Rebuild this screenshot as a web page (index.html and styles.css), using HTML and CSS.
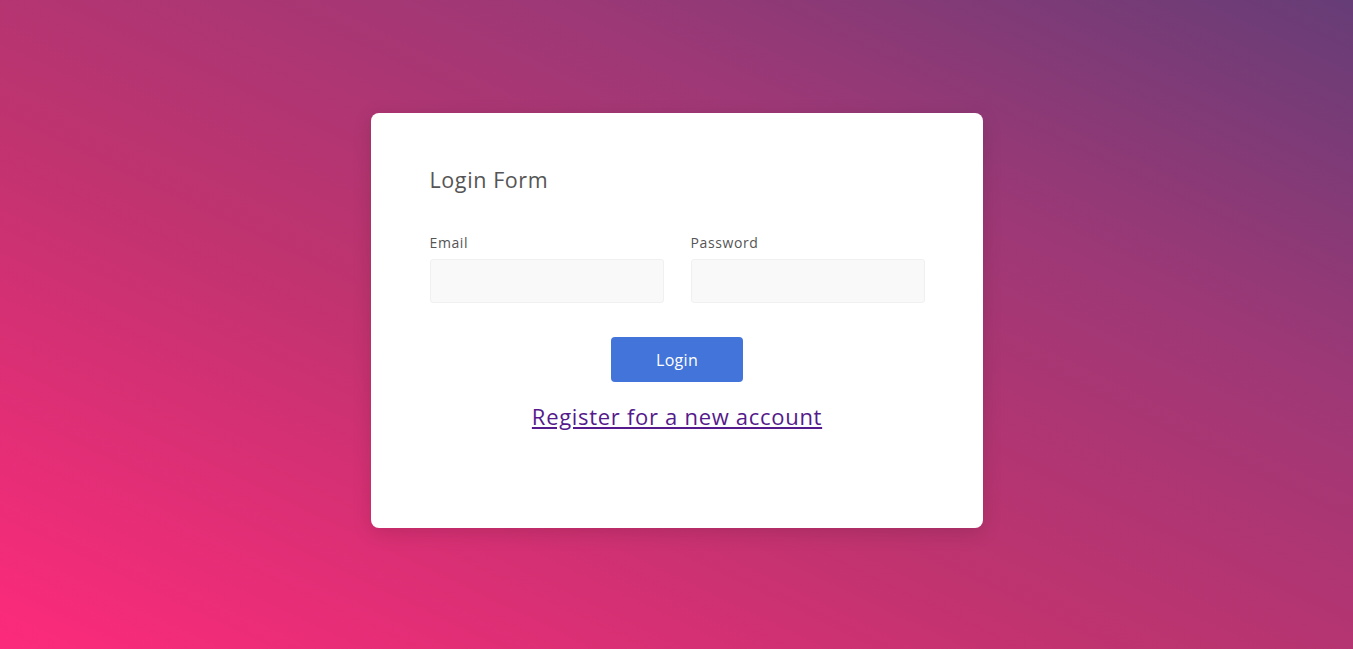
FILE: index.html
```html
<html>
<head>
  <meta name="viewport" content="width=device-width, initial-scale=1">
  <title>Login</title>
  <link rel="stylesheet" href="styles.css">
</head>
<body>
  <div class="wrapper">
    <div class="card">
      <h2 class="title">Login Form</h2>
      <form class="form">
        <div class="form-row">
          <div class="form-group">
            <label for="email" class="form-label">Email</label>
            <input type="email" id="email" class="form-control">
          </div>
          <div class="form-group">
            <label for="password" class="form-label">Password</label>
            <input type="password" id="password" class="form-control">
          </div>
        </div>
        <div class="actions">
          <button type="submit" class="btn">Login</button>
          <a href="#" class="register">Register for a new account</a>
        </div>
      </form>
    </div>
  </div>
</body>
</html>
```

FILE: styles.css
```css
* {
  box-sizing: border-box;
}

body {
  margin: 0;
  font-family: "Open Sans", "Noto Sans", sans-serif;
  color: #555;
  background: linear-gradient(to top right, #fd2a7b 0%, #c0336f 40%, #9e3876 70%, #663d77 100%);
  min-height: 100vh;
}

.wrapper {
  min-height: 100vh;
  display: flex;
  justify-content: center;
  align-items: center;
  padding-bottom: 8px;
}

.card {
  width: 612px;
  height: 415px;
  background-color: #fff;
  border-radius: 8px;
  box-shadow: 0 5px 20px rgba(0, 0, 0, 0.13);
  padding: 52px 58px 0 59px;
}

.title {
  margin: 0;
  font-size: 21.5px;
  font-weight: 400;
  line-height: 30px;
  letter-spacing: 0.6px;
  color: #555;
}

.form {
  margin-top: 38px;
}

/* fila de campos */
.form-row {
  display: flex;
  gap: 27px;
}

.form-group {
  flex: 1;
  display: flex;
  flex-direction: column;
}

.form-label {
  font-size: 14px;
  line-height: 20px;
  letter-spacing: 0.6px;
  margin-bottom: 6px;
  color: #555;
}

.form-control {
  height: 44px;
  background-color: #f9f9f9;
  border: 1px solid #f0f0f0;
  border-radius: 3px;
  outline: none;
}

.actions {
  display: flex;
  flex-direction: column;
  align-items: center;
  margin-top: 34px;
}

.btn {
  width: 132px;
  height: 45px;
  background-color: #4374d9;
  color: #fff;
  border: none;
  border-radius: 4px;
  font-family: inherit;
  font-size: 16px;
  letter-spacing: 0.3px;
  cursor: pointer;
}

.register {
  margin-top: 18px;
  font-size: 22px;
  line-height: 33px;
  letter-spacing: 0.7px;
  color: #551a8b;
}
```
